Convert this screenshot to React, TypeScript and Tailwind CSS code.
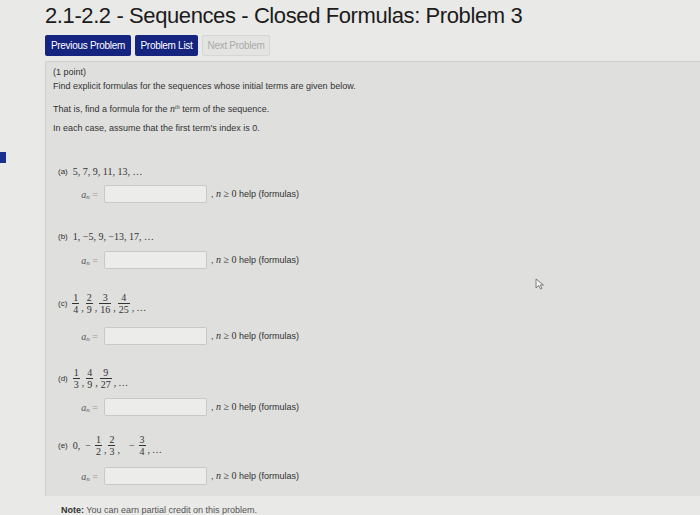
import React from 'react';

const serif = "font-['Liberation_Serif','DejaVu_Serif',serif]";

const Frac = ({ n, d, neg }: { n: string; d: string; neg?: boolean }) => (
  <span className="inline-flex items-center">
    {neg && <span className="mr-[4px] text-[10px]">−</span>}
    <span className="inline-flex flex-col items-center text-[10px] leading-[11px]">
      <span className="px-[1px]">{n}</span>
      <span className="w-full border-t border-[#333]" />
      <span className="px-[1px]">{d}</span>
    </span>
  </span>
);

const Comma = () => <span className="mx-[1px] mt-[8px] text-[10px] leading-none">,</span>;

const Dots = () => <span className="mt-[8px] text-[10px] leading-none">…</span>;

const AnswerRow = ({ className }: { className?: string }) => (
  <div className={`flex items-center ${className ?? ''}`}>
    <span className={`${serif} w-[46px] pr-[6px] text-right text-[10px] text-[#555]`}>
      <i>a</i>
      <sub className="text-[7px]">
        <i>n</i>
      </sub>{' '}
      <span className="text-[#999]">=</span>
    </span>
    <div className="h-[18px] w-[103px] rounded-[2px] border border-[#c9c9c7] bg-[#ececea]" />
    <span className="ml-[4px] text-[9px] text-[#333]">
      ,{' '}
      <span className={`${serif} text-[10px]`}>
        <i>n</i> ≥ 0
      </span>{' '}
      help (formulas)
    </span>
  </div>
);

const Part = ({ label, children }: { label: string; children: React.ReactNode }) => (
  <div className="flex items-center text-[#333]">
    <span className="mr-[5px] text-[8px]">{label}</span>
    <span className={`${serif} flex items-center gap-[1px] text-[10px]`}>{children}</span>
  </div>
);

export default function App() {
  return (
    <div className="relative h-[515px] w-[700px] overflow-hidden bg-[#e9e9e7] font-['Liberation_Sans',Arial,sans-serif]">
      <span className="absolute left-0 top-[152px] h-[11px] w-[6px] bg-[#1b2f8f]" />
      <svg className="absolute left-[535px] top-[278px]" width="10" height="12" viewBox="0 0 10 12">
        <path d="M1 1 L1 10 L3.5 7.5 L5.5 11 L7 10.3 L5 7 L8.5 7 Z" fill="#f4f4f4" stroke="#666" strokeWidth="0.8" />
      </svg>

      <div className="pl-[45px]">
        <h1 className="pt-[2px] text-[22px] leading-[28px] tracking-[-0.4px] text-[#1c1c1c]">
          2.1-2.2 - Sequences - Closed Formulas: Problem 3
        </h1>

        <div className="mt-[5px] flex gap-[4px] text-[10px] tracking-[-0.3px]">
          <button className="h-[21px] w-[86px] rounded-[2px] bg-[#15247f] text-white">Previous Problem</button>
          <button className="h-[21px] w-[63px] rounded-[2px] bg-[#15247f] text-white">Problem List</button>
          <button className="h-[21px] w-[68px] rounded-[2px] border border-[#d6d6d4] bg-[#e4e4e2] text-[#aaa]">
            Next Problem
          </button>
        </div>

        <div className="mt-[5px] h-[435px] border-t border-l border-[#cfcfcd] bg-[#dfdfdd] pl-[7px] pt-[5px] text-[9px] text-[#333]">
          <p className="leading-[11px]">(1 point)</p>
          <p className="mt-[3px] leading-[11px]">Find explicit formulas for the sequences whose initial terms are given below.</p>
          <p className="mt-[11px] leading-[12px]">
            That is, find a formula for the{' '}
            <span className={`${serif} text-[10px]`}>
              <i>n</i>
              <sup className="text-[6px]">
                <i>th</i>
              </sup>
            </span>{' '}
            term of the sequence.
          </p>
          <p className="mt-[8px] leading-[11px]">In each case, assume that the first term's index is 0.</p>

          <div className="ml-[5px] mt-[30px]">
            <Part label="(a)">5, 7, 9, 11, 13, …</Part>
            <AnswerRow className="mt-[6px]" />

            <div className="mt-[26px]">
              <Part label="(b)">1, −5, 9, −13, 17, …</Part>
            </div>
            <AnswerRow className="mt-[7px]" />

            <div className="mt-[23px]">
              <Part label="(c)">
                <Frac n="1" d="4" />
                <Comma />
                <Frac n="2" d="9" />
                <Comma />
                <Frac n="3" d="16" />
                <Comma />
                <Frac n="4" d="25" />
                <Comma />
                <Dots />
              </Part>
            </div>
            <AnswerRow className="mt-[12px]" />

            <div className="mt-[22px]">
              <Part label="(d)">
                <Frac n="1" d="3" />
                <Comma />
                <Frac n="4" d="9" />
                <Comma />
                <Frac n="9" d="27" />
                <Comma />
                <Dots />
              </Part>
            </div>
            <AnswerRow className="mt-[8px]" />

            <div className="mt-[18px]">
              <Part label="(e)">
                <span className="mr-[4px]">0,</span>
                <Frac n="1" d="2" neg />
                <Comma />
                <Frac n="2" d="3" />
                <Comma />
                <span className="ml-[6px]" />
                <Frac n="3" d="4" neg />
                <Comma />
                <Dots />
              </Part>
            </div>
            <AnswerRow className="mt-[10px]" />
          </div>
        </div>

        <p className="mt-[8px] pl-[16px] text-[9px] text-[#555]">
          <b className="text-[#333]">Note:</b> You can earn partial credit on this problem.
        </p>
      </div>
    </div>
  );
}
